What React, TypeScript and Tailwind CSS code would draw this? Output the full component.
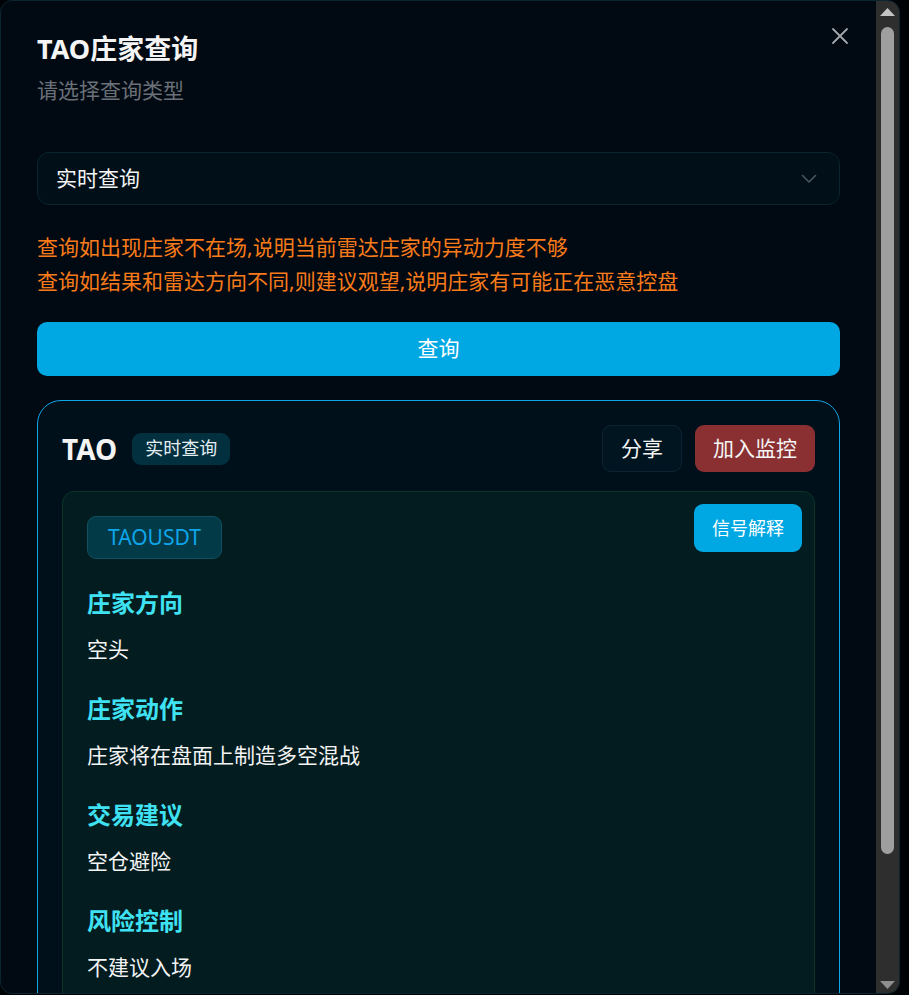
import React from "react";

const sections = [
  { title: "庄家方向", value: "空头" },
  { title: "庄家动作", value: "庄家将在盘面上制造多空混战" },
  { title: "交易建议", value: "空仓避险" },
  { title: "风险控制", value: "不建议入场" },
];

export default function App() {
  return (
    <div className="w-[909px] h-[995px] bg-[#000306] flex font-['Noto_Sans','Noto_Sans_CJK_SC',sans-serif] overflow-hidden">
      <div className="w-[900px] h-[994px] rounded-[12px] border border-[#0a2530] bg-[#010a12] overflow-hidden flex">
        {/* content */}
        <div className="relative flex-1 overflow-hidden px-[36px] pt-[34px]">
          <button className="absolute top-[26px] right-[27px] w-[18px] h-[18px] flex items-center justify-center">
            <svg width="18" height="18" viewBox="0 0 18 18" fill="none">
              <path d="M2 2L16 16M16 2L2 16" stroke="#a3a7ad" strokeWidth="1.8" strokeLinecap="round" />
            </svg>
          </button>

          <h1 className="text-[27px] leading-none font-bold text-[#f4f4f5]">TAO庄家查询</h1>
          <p className="mt-[13px] text-[21px] leading-[30px] text-[#6b7078]">请选择查询类型</p>

          <div className="mt-[47px] h-[53px] rounded-[12px] border border-[#0b2430] bg-[#010f18] flex items-center justify-between pl-[18px] pr-[22px]">
            <span className="text-[21px] text-[#f4f4f5]">实时查询</span>
            <svg width="16" height="10" viewBox="0 0 16 10" fill="none">
              <path d="M1.5 1.5L8 8L14.5 1.5" stroke="#4b5560" strokeWidth="1.6" strokeLinecap="round" strokeLinejoin="round" />
            </svg>
          </div>

          <div className="mt-[25px] text-[21px] leading-[34px] text-[#f97b1a]">
            <p>查询如出现庄家不在场,说明当前雷达庄家的异动力度不够</p>
            <p>查询如结果和雷达方向不同,则建议观望,说明庄家有可能正在恶意控盘</p>
          </div>

          <button className="mt-[24px] w-full h-[54px] rounded-[10px] bg-[#00a8e3] text-[21px] text-white flex items-center justify-center">
            查询
          </button>

          <div className="mt-[24px] rounded-[24px] border border-[#0ea5e9] bg-[#00101a] p-[24px]">
            <div className="h-[47px] flex items-center justify-between">
              <div className="flex items-center">
                <span className="text-[28px] font-bold text-[#f4f4f5]">TAO</span>
                <span className="ml-[15px] h-[32px] px-[13px] rounded-[9px] bg-[#03303f] text-[18px] text-[#e2eef2] flex items-center">
                  实时查询
                </span>
              </div>
              <div className="flex items-center gap-[13px]">
                <button className="h-[47px] px-[18px] rounded-[9px] border border-[#0c2432] bg-[#011521] text-[21px] text-[#f4f4f5]">
                  分享
                </button>
                <button className="h-[47px] px-[18px] rounded-[9px] bg-[#8a3033] text-[21px] text-[#f4f4f5]">
                  加入监控
                </button>
              </div>
            </div>

            <div className="relative mt-[19px] rounded-[12px] border border-[#0b3326] bg-[#031c1f] px-[24px] pt-[24px] pb-[60px]">
              <button className="absolute top-[12px] right-[12px] w-[108px] h-[48px] rounded-[9px] bg-[#00a8e3] text-[18px] text-white flex items-center justify-center">
                信号解释
              </button>
              <div className="inline-flex h-[43px] px-[20px] items-center rounded-[9px] border border-[#11505e] bg-[#023a47] text-[21px] text-[#0ea5e9]">
                TAOUSDT
              </div>
              <div className="mt-[26px] flex flex-col gap-[25px]">
                {sections.map((s) => (
                  <div key={s.title}>
                    <div className="text-[24px] leading-[36px] font-bold text-[#3fe2f2]">{s.title}</div>
                    <div className="mt-[11px] text-[21px] leading-[34px] text-[#f4f4f5]">{s.value}</div>
                  </div>
                ))}
              </div>
            </div>
          </div>
        </div>

        {/* scrollbar */}
        <div className="w-[23px] bg-[#2e2e2e] flex flex-col items-center pt-[7px] pb-[4px]">
          <svg width="15" height="8" viewBox="0 0 15 8">
            <path d="M7.5 0L15 8H0Z" fill="#c4c4c4" />
          </svg>
          <div className="mt-[11px] w-[13px] h-[827px] rounded-full bg-[#9f9f9f]" />
          <div className="flex-1" />
          <svg width="15" height="8" viewBox="0 0 15 8">
            <path d="M0 0H15L7.5 8Z" fill="#8f8f8f" />
          </svg>
        </div>
      </div>
    </div>
  );
}
